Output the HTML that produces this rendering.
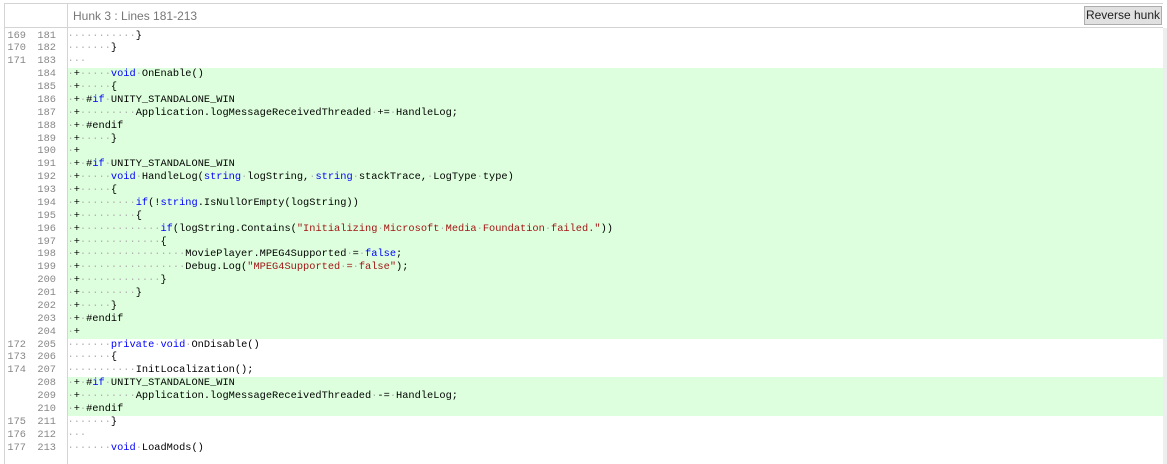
<!DOCTYPE html>
<html><head><meta charset="utf-8"><style>
*{margin:0;padding:0;box-sizing:border-box}
body{width:1167px;height:464px;background:#fff;position:relative;overflow:hidden;font-family:"Liberation Mono",monospace;font-size:10.33px}
.vl{position:absolute;background:#d4d4d4;width:1px}
.hdr{position:absolute;left:4px;top:3px;width:1159px;height:25px;border-top:1px solid #d4d4d4;border-bottom:1px solid #d4d4d4}
.ht{position:absolute;left:73px;top:9px;font-family:"Liberation Sans",sans-serif;font-size:12px;color:#777}
.btn{position:absolute;left:1084px;top:6px;width:78px;height:19px;background:#e1e1e1;border:1px solid #adadad;font-family:"Liberation Sans",sans-serif;font-size:12px;color:#222;text-align:center;line-height:17px}
.rows{position:absolute;left:4px;top:29.5px;width:1159px}
.r{height:12.875px;line-height:12.875px;position:relative;white-space:pre;color:#000}
.r.a .c{background:#ddffdd}
.o,.n{position:absolute;top:0;color:#888;text-align:right;width:22px}
.o{left:0}.n{left:30px}
.c{position:absolute;left:63.5px;top:0;right:0;height:100%}
i{font-style:normal;color:#b0b0b0}
b{font-weight:normal;color:#0000ff}
s{text-decoration:none;color:#a31515}
</style></head><body>
<div class="vl" style="left:4px;top:3px;height:461px"></div>
<div class="vl" style="left:67px;top:3px;height:461px"></div>
<div style="position:absolute;left:1163px;top:28px;width:4px;height:436px;background:#eeeeee"></div>
<div class="hdr"></div>
<div class="ht">Hunk 3 : Lines 181-213</div>
<div class="btn">Reverse hunk</div>
<div class="rows">
<div class="r"><span class="o">169</span><span class="n">181</span><span class="c"><i>···········</i>}</span></div>
<div class="r"><span class="o">170</span><span class="n">182</span><span class="c"><i>·······</i>}</span></div>
<div class="r"><span class="o">171</span><span class="n">183</span><span class="c"><i>···</i></span></div>
<div class="r a"><span class="n">184</span><span class="c"><i>·</i>+<i>·····</i><b>void</b><i>·</i>OnEnable()</span></div>
<div class="r a"><span class="n">185</span><span class="c"><i>·</i>+<i>·····</i>{</span></div>
<div class="r a"><span class="n">186</span><span class="c"><i>·</i>+<i>·</i>#<b>if</b><i>·</i>UNITY_STANDALONE_WIN</span></div>
<div class="r a"><span class="n">187</span><span class="c"><i>·</i>+<i>·········</i>Application.logMessageReceivedThreaded<i>·</i>+=<i>·</i>HandleLog;</span></div>
<div class="r a"><span class="n">188</span><span class="c"><i>·</i>+<i>·</i>#endif</span></div>
<div class="r a"><span class="n">189</span><span class="c"><i>·</i>+<i>·····</i>}</span></div>
<div class="r a"><span class="n">190</span><span class="c"><i>·</i>+</span></div>
<div class="r a"><span class="n">191</span><span class="c"><i>·</i>+<i>·</i>#<b>if</b><i>·</i>UNITY_STANDALONE_WIN</span></div>
<div class="r a"><span class="n">192</span><span class="c"><i>·</i>+<i>·····</i><b>void</b><i>·</i>HandleLog(<b>string</b><i>·</i>logString,<i>·</i><b>string</b><i>·</i>stackTrace,<i>·</i>LogType<i>·</i>type)</span></div>
<div class="r a"><span class="n">193</span><span class="c"><i>·</i>+<i>·····</i>{</span></div>
<div class="r a"><span class="n">194</span><span class="c"><i>·</i>+<i>·········</i><b>if</b>(!<b>string</b>.IsNullOrEmpty(logString))</span></div>
<div class="r a"><span class="n">195</span><span class="c"><i>·</i>+<i>·········</i>{</span></div>
<div class="r a"><span class="n">196</span><span class="c"><i>·</i>+<i>·············</i><b>if</b>(logString.Contains(<s>"Initializing<i>·</i>Microsoft<i>·</i>Media<i>·</i>Foundation<i>·</i>failed."</s>))</span></div>
<div class="r a"><span class="n">197</span><span class="c"><i>·</i>+<i>·············</i>{</span></div>
<div class="r a"><span class="n">198</span><span class="c"><i>·</i>+<i>·················</i>MoviePlayer.MPEG4Supported<i>·</i>=<i>·</i><b>false</b>;</span></div>
<div class="r a"><span class="n">199</span><span class="c"><i>·</i>+<i>·················</i>Debug.Log(<s>"MPEG4Supported<i>·</i>=<i>·</i>false"</s>);</span></div>
<div class="r a"><span class="n">200</span><span class="c"><i>·</i>+<i>·············</i>}</span></div>
<div class="r a"><span class="n">201</span><span class="c"><i>·</i>+<i>·········</i>}</span></div>
<div class="r a"><span class="n">202</span><span class="c"><i>·</i>+<i>·····</i>}</span></div>
<div class="r a"><span class="n">203</span><span class="c"><i>·</i>+<i>·</i>#endif</span></div>
<div class="r a"><span class="n">204</span><span class="c"><i>·</i>+</span></div>
<div class="r"><span class="o">172</span><span class="n">205</span><span class="c"><i>·······</i><b>private</b><i>·</i><b>void</b><i>·</i>OnDisable()</span></div>
<div class="r"><span class="o">173</span><span class="n">206</span><span class="c"><i>·······</i>{</span></div>
<div class="r"><span class="o">174</span><span class="n">207</span><span class="c"><i>···········</i>InitLocalization();</span></div>
<div class="r a"><span class="n">208</span><span class="c"><i>·</i>+<i>·</i>#<b>if</b><i>·</i>UNITY_STANDALONE_WIN</span></div>
<div class="r a"><span class="n">209</span><span class="c"><i>·</i>+<i>·········</i>Application.logMessageReceivedThreaded<i>·</i>-=<i>·</i>HandleLog;</span></div>
<div class="r a"><span class="n">210</span><span class="c"><i>·</i>+<i>·</i>#endif</span></div>
<div class="r"><span class="o">175</span><span class="n">211</span><span class="c"><i>·······</i>}</span></div>
<div class="r"><span class="o">176</span><span class="n">212</span><span class="c"><i>···</i></span></div>
<div class="r"><span class="o">177</span><span class="n">213</span><span class="c"><i>·······</i><b>void</b><i>·</i>LoadMods()</span></div>
</div>
</body></html>
